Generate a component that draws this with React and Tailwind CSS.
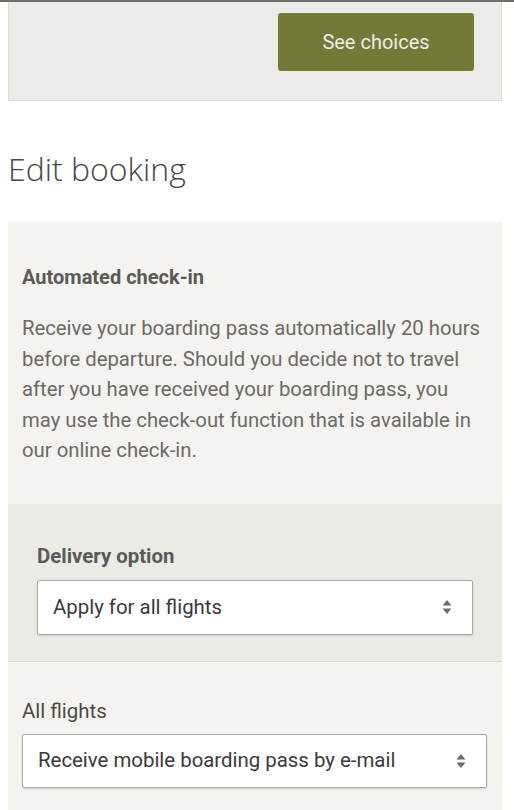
import React from 'react';

function SelectArrows() {
    return (
        <svg width="10" height="16" viewBox="0 0 10 16" className="shrink-0">
            <path d="M5 1 L9.5 6.5 L0.5 6.5 Z" fill="#6b6b6b" />
            <path d="M5 15 L9.5 9.5 L0.5 9.5 Z" fill="#6b6b6b" />
        </svg>
    );
}

function FakeSelect({ value, className }) {
    return (
        <div className={`flex items-center justify-between bg-white border border-[#a9a9a6] rounded-[2px] shadow-[0_1px_2px_rgba(0,0,0,0.15)] pl-[15px] pr-[20px] ${className}`}>
            <span className="text-[20.4px] text-[#3a3a3a]">{value}</span>
            <SelectArrows />
        </div>
    );
}

export default function App() {
    return (
        <div className="w-[514px] min-h-[810px] bg-white font-['Roboto',sans-serif] border-t-2 border-[#6f6f6b] overflow-hidden">
            <div className="ml-2 w-[494px] h-[99px] bg-[#ecebe7] border border-t-0 border-[#dcdcd7] flex justify-end items-start pt-[11px] pr-[27px]">
                <button className="w-[196px] h-[58px] rounded-[3px] bg-[#747839] text-[#ecece4] text-[20px]">
                    See choices
                </button>
            </div>

            <h1 className="ml-2 mt-[49px] text-[32px] leading-[38px] font-light text-[#454545] font-['Open_Sans',sans-serif]">
                Edit booking
            </h1>

            <div className="ml-2 mt-[34px] w-[494px] bg-[#f4f3ef]">
                <div className="px-[14px] pt-[43px] pb-[38px]">
                    <h2 className="text-[20px] font-bold text-[#5a5a58] leading-[24px]">Automated check-in</h2>
                    <p className="mt-[24px] w-[462px] text-[20.3px] leading-[30.5px] text-[#6a6a68]">
                        Receive your boarding pass automatically 20 hours before departure. Should you decide not to travel after you have received your boarding pass, you may use the check-out function that is available in our online check-in.
                    </p>
                </div>

                <div className="bg-[#ebebe6] border-b border-[#dbdbd6] pl-[29px] pr-[29px] pt-[40px] pb-[26px]">
                    <div className="text-[20.4px] font-bold text-[#5a5a58] leading-[24px]">Delivery option</div>
                    <FakeSelect value="Apply for all flights" className="mt-[12px] h-[55px]" />
                </div>

                <div className="px-[14px] pt-[37px] pb-[30px]">
                    <div className="text-[20.4px] text-[#4a4a48] leading-[24px]">All flights</div>
                    <FakeSelect value="Receive mobile boarding pass by e-mail" className="mt-[11px] h-[54px] w-[465px]" />
                </div>
            </div>
        </div>
    );
}
